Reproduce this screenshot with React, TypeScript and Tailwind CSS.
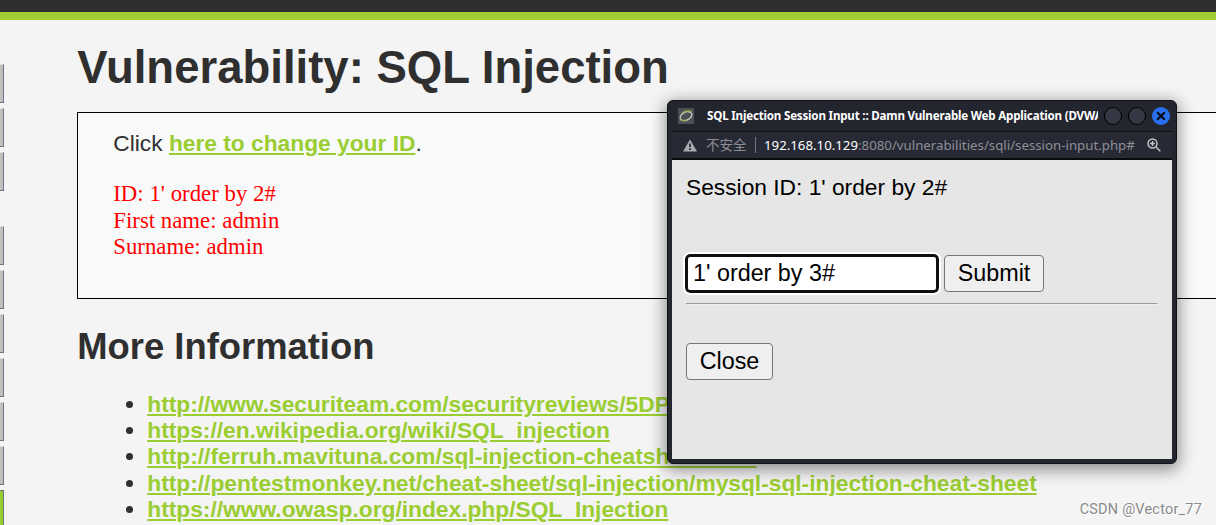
const links = [
  "http://www.securiteam.com/securityreviews/5DP0N1P76E.html",
  "https://en.wikipedia.org/wiki/SQL_injection",
  "http://ferruh.mavituna.com/sql-injection-cheatsheet-oku/",
  "http://pentestmonkey.net/cheat-sheet/sql-injection/mysql-sql-injection-cheat-sheet",
  "https://www.owasp.org/index.php/SQL_Injection",
];

const menuItem =
  "h-[39px] w-1 shrink-0 border-r border-y border-t-[#dcdcdc] border-r-[#6c7387] border-b-[#6c7387] bg-[#c0c0bc]";

export default function App() {
  return (
    <div className="relative h-[525px] w-[1216px] overflow-hidden bg-[#f4f4f4] font-['Liberation_Sans',Arial,sans-serif] text-[22.75px] text-[#2f2f2f]">
      <div className="h-5 border-b-8 border-[#a0cd34] bg-[#2f2f2f]" />

      <div className="flex">
        <SideMenu />

        <main className="ml-[73.25px] w-[1139px] shrink-0">
          <h1 className="mt-[22px] text-[45.5px] leading-[52px] font-bold whitespace-nowrap">
            Vulnerability: SQL Injection
          </h1>

          <div className="mt-[18px] h-[187px] border border-r-0 border-black bg-[#f8faf9] pt-[17px] pl-[35px]">
            <div className="leading-[27px]">
              Click{" "}
              <a href="#" className="font-bold text-[#9acd32] underline">
                here to change your ID
              </a>
              .
            </div>
            <pre className="mt-[24.3px] font-['Liberation_Serif','Times_New_Roman',serif] leading-[26.25px] tracking-[0.03px] text-[#ff0000]">
              {"ID: 1' order by 2#\nFirst name: admin\nSurname: admin"}
            </pre>
          </div>

          <h2 className="mt-[27px] text-[36.4px] leading-[42px] font-bold">
            More Information
          </h2>

          <ul className="mt-[22.85px] list-disc pl-[70px] leading-[26.25px]">
            {links.map((link) => (
              <li key={link}>
                <a href="#" className="font-bold whitespace-nowrap text-[#9acd32] underline">
                  {link}
                </a>
              </li>
            ))}
          </ul>
        </main>
      </div>

      <SessionWindow />

      <div className="absolute right-[14px] bottom-[5px] font-['Roboto',sans-serif] text-[14.5px] leading-5 tracking-[0.2px] text-[#8b8b8b] [text-shadow:1px_1px_0_#ffffff]">
        CSDN @Vector_77
      </div>
    </div>
  );
}

const SideMenu = () => (
  <div className="mt-11 flex h-[461px] w-1 shrink-0 flex-col gap-[5px] overflow-hidden">
    <div className={menuItem} />
    <div className={menuItem} />
    <div className={`${menuItem} mb-[30px]`} />
    <div className={menuItem} />
    <div className={menuItem} />
    <div className={menuItem} />
    <div className={menuItem} />
    <div className={menuItem} />
    <div className={menuItem} />
    <div className="h-[39px] w-1 shrink-0 border-y border-r border-[#6c7387] bg-[#9acd32]" />
  </div>
);

const SessionWindow = () => (
  <div className="absolute top-[100px] left-[667px] flex h-[364px] w-[510px] flex-col rounded-[6px] border border-[#101218] bg-[#23252f] px-1 pb-1 shadow-[0_4px_16px_2px_rgba(0,0,0,0.42)]">
    <div className="flex h-[31px] shrink-0 items-center border-b border-[#0e1015] pl-1.5">
      <DvwaIcon />
      <div className="ml-[13px] w-[391px] shrink-0 overflow-hidden font-['Noto_Sans',sans-serif] text-[11.6px] font-bold tracking-[-0.2px] whitespace-nowrap text-white">
        SQL Injection Session Input :: Damn Vulnerable Web Application (DVWA)
      </div>
      <div className="ml-[6px] flex gap-1.5">
        <div className="size-[18px] rounded-full border border-black bg-[#343845]" />
        <div className="size-[18px] rounded-full border border-black bg-[#343845]" />
        <div className="flex size-[18px] items-center justify-center rounded-full bg-[#2870ed]">
          <svg width="10" height="10" viewBox="0 0 10 10" stroke="#0b0d14" strokeWidth="2.2">
            <path d="M1.2 1.2L8.8 8.8M8.8 1.2L1.2 8.8" />
          </svg>
        </div>
      </div>
    </div>

    <div className="flex h-7 shrink-0 items-center border-b-2 border-[#090a0e] bg-[#272935] pl-[11px] font-['Noto_Sans','Noto_Sans_CJK_SC',sans-serif] text-[13.25px] whitespace-nowrap text-[#8e8f95]">
      <svg width="14" height="13" viewBox="0 0 14 13" className="shrink-0">
        <path d="M7 0.5L14 12.5H0Z" fill="#a9aab0" />
        <path d="M7 4.5V8M7 9.3V11" stroke="#272935" strokeWidth="1.8" />
      </svg>
      <span className="ml-[9px] w-[42px] shrink-0 text-[13.5px]">不安全</span>
      <span className="ml-[7px] h-4 w-px shrink-0 bg-[#75767d]" />
      <span className="ml-[8px] w-[371px] shrink-0 pt-0.5">
        <span className="text-white">192.168.10.129</span>
        :8080/vulnerabilities/sqli/session-input.php#
      </span>
      <svg
        width="14"
        height="14"
        viewBox="0 0 14 14"
        fill="none"
        stroke="#c0c1c5"
        strokeWidth="1.5"
        className="ml-3 shrink-0"
      >
        <circle cx="5.5" cy="5.5" r="4.5" />
        <path d="M9 9L13.3 13.3M3 5.5H8M5.5 3V8" />
      </svg>
    </div>

    <div className="grow bg-[#e6e6e6] px-3.5 pt-[14px] text-black">
      <div className="leading-[27px]">Session ID: 1' order by 2#</div>

      <div className="mt-[54px] flex items-center text-[23.33px]">
        <input
          type="text"
          defaultValue="1' order by 3#"
          className="h-[37px] w-[252px] rounded-[4px] border-2 border-[#101010] bg-white px-[5px] ring-1 ring-[#101010] outline-2 outline-offset-1 outline-white"
        />
        <button className="ml-1.5 h-[37px] w-[100px] rounded-[4px] border border-[#767676] bg-[#efefef]">
          Submit
        </button>
      </div>

      <hr className="mt-[11px] h-0.5 border border-t-[#9a9a9a] border-r-[#eeeeee] border-b-[#eeeeee] border-l-[#9a9a9a]" />

      <button className="mt-[38px] h-[37px] w-[87px] rounded-[4px] border border-[#767676] bg-[#efefef] text-[23.33px]">
        Close
      </button>
    </div>
  </div>
);

const DvwaIcon = () => (
  <svg width="16" height="16" viewBox="0 0 16 16" fill="none" className="shrink-0">
    <rect width="16" height="16" fill="#4c5055" />
    <ellipse cx="8" cy="8.2" rx="6.2" ry="4" transform="rotate(-25 8 8.2)" stroke="#c9cdc6" strokeWidth="1.3" />
    <path d="M4 5.2C7 3 11 2.6 13.6 4M2.6 11.6C4 12.6 7 12.6 9 11.8" stroke="#9aab55" strokeWidth="1.3" />
  </svg>
);
